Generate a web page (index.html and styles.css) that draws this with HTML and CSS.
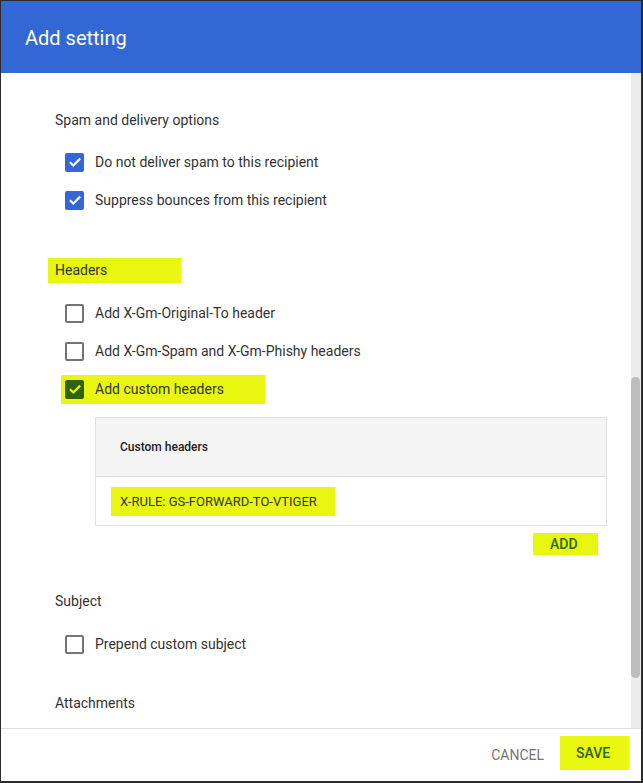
FILE: index.html
```html
<!DOCTYPE html>
<html lang="en">
<head>
<meta charset="utf-8">
<title>Add setting</title>
<link rel="stylesheet" href="styles.css">
</head>
<body>
<div class="dialog">
  <div class="dialog-header">
    <h1 class="dialog-title">Add setting</h1>
  </div>
  <div class="dialog-body">
    <div class="content">
      <div class="section-title first">Spam and delivery options</div>
      <div class="options">
        <label class="option">
          <span class="cb checked"><svg viewBox="0 0 18 18" width="18" height="18"><path d="M4 9.2l3.3 3.3L14.2 5.6" fill="none" stroke="#fff" stroke-width="2.2"/></svg></span>
          <span class="option-text">Do not deliver spam to this recipient</span>
        </label>
        <label class="option">
          <span class="cb checked"><svg viewBox="0 0 18 18" width="18" height="18"><path d="M4 9.2l3.3 3.3L14.2 5.6" fill="none" stroke="#fff" stroke-width="2.2"/></svg></span>
          <span class="option-text">Suppress bounces from this recipient</span>
        </label>
      </div>

      <div class="section-title headers"><span class="hl hl-title">Headers</span></div>
      <div class="options options-headers">
        <label class="option">
          <span class="cb"></span>
          <span class="option-text">Add X-Gm-Original-To header</span>
        </label>
        <label class="option">
          <span class="cb"></span>
          <span class="option-text">Add X-Gm-Spam and X-Gm-Phishy headers</span>
        </label>
        <label class="option">
          <span class="hl hl-option">
            <span class="cb checked hl-checked"><svg viewBox="0 0 18 18" width="18" height="18"><path d="M4 9.2l3.3 3.3L14.2 5.6" fill="none" stroke="#e9f60f" stroke-width="2.2"/></svg></span>
            <span class="option-text">Add custom headers</span>
          </span>
        </label>
      </div>

      <div class="table">
        <div class="table-head">Custom headers</div>
        <div class="table-row"><span class="hl hl-cell">X-RULE: GS-FORWARD-TO-VTIGER</span></div>
      </div>
      <div class="add-row"><span class="hl hl-add">ADD</span></div>

      <div class="section-title subject">Subject</div>
      <div class="options options-subject">
        <label class="option">
          <span class="cb"></span>
          <span class="option-text">Prepend custom subject</span>
        </label>
      </div>
      <div class="section-title attachments">Attachments</div>
    </div>
    <div class="scrollbar"><div class="thumb"></div></div>
  </div>
  <div class="dialog-footer">
    <span class="btn btn-cancel">CANCEL</span>
    <span class="btn hl btn-save">SAVE</span>
  </div>
</div>
</body>
</html>
```
FILE: styles.css
```css
* { box-sizing: border-box; }
html, body {
  margin: 0;
  padding: 0;
  height: 783px;
  overflow: hidden;
  background: #2c2c2c;
  font-family: Roboto, "Liberation Sans", Arial, sans-serif;
}
.dialog {
  margin: 1px 2px 2px 1px;
  width: 640px;
  height: 780px;
  background: #fff;
  display: flex;
  flex-direction: column;
}
.dialog-header {
  height: 72px;
  flex: none;
  background: #3367d6;
  display: flex;
  align-items: center;
  padding: 2px 0 0 24px;
}
.dialog-title {
  margin: 0;
  font-size: 20px;
  font-weight: 400;
  color: #fff;
  line-height: 24px;
}
.dialog-body {
  flex: 1;
  display: flex;
  overflow: hidden;
  min-height: 0;
}
.content {
  flex: 1;
  padding: 37px 24px 0 54px;
  color: #333;
  font-size: 14px;
  overflow: hidden;
}
.section-title {
  line-height: 20px;
  height: 20px;
}
.options { margin-top: 13px; }
.option {
  height: 38px;
  display: flex;
  align-items: center;
  padding-left: 10px;
}
.cb {
  width: 19px;
  height: 19px;
  flex: none;
  border: 2px solid #757575;
  border-radius: 2px;
  display: inline-flex;
  align-items: center;
  justify-content: center;
}
.cb.checked {
  border: none;
  background: #3367d6;
}
.cb svg { display: block; }
.option-text {
  margin-left: 11px;
  line-height: 20px;
}
.hl { background: #e9f60f; }
.section-title.headers {
  margin-top: 39px;
  height: 25px;
  margin-left: -7px;
}
.hl-title {
  display: inline-block;
  width: 133px;
  height: 25px;
  line-height: 24px;
  padding-left: 7px;
}
.options-headers { margin-top: 11px; }
.hl-option {
  display: inline-flex;
  align-items: center;
  width: 204px;
  height: 29px;
  margin-left: -4px;
  padding-left: 4px;
}
.cb.hl-checked { background: #2f630d; }
.table {
  margin: 9px 0 0 40px;
  border: 1px solid #e0e0e0;
}
.table-head {
  height: 59px;
  background: #f4f4f4;
  border-bottom: 1px solid #e0e0e0;
  display: flex;
  align-items: center;
  padding-left: 24px;
  font-size: 12px;
  font-weight: 500;
  color: #212121;
}
.table-row {
  height: 48px;
  padding: 10px 0 0 15px;
}
.hl-cell {
  display: inline-block;
  width: 224px;
  height: 29px;
  line-height: 29px;
  padding-left: 9px;
  font-size: 13px;
  color: #333;
}
.add-row {
  margin-top: 7px;
  height: 22px;
  display: flex;
  justify-content: flex-end;
  padding-right: 9px;
}
.hl-add {
  width: 65px;
  height: 22px;
  line-height: 22px;
  padding-left: 17px;
  font-weight: 500;
  font-size: 14px;
  color: #2f630d;
}
.section-title.subject { margin-top: 36px; }
.options-subject { margin-top: 14px; }
.section-title.attachments { margin-top: 30px; }
.scrollbar {
  width: 10px;
  flex: none;
  background: #ececec;
  padding-top: 304px;
}
.thumb {
  width: 9px;
  height: 301px;
  background: #bdbdbd;
  border-radius: 5px;
}
.dialog-footer {
  height: 53px;
  flex: none;
  border-top: 1px solid #e0e0e0;
  display: flex;
  align-items: center;
  justify-content: flex-end;
  padding: 0 12px 0 0;
}
.btn {
  font-size: 14px;
  line-height: 20px;
}
.btn-cancel {
  color: #757575;
  margin-right: 16px;
  margin-bottom: 1px;
}
.btn-save {
  width: 69px;
  height: 34px;
  line-height: 34px;
  padding-left: 16px;
  font-weight: 500;
  color: #2f630d;
  margin-bottom: 5px;
}
```
